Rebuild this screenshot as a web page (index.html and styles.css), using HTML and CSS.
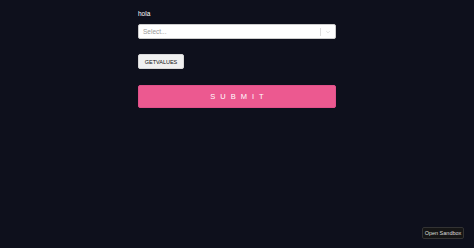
FILE: index.html
```html
<!DOCTYPE html>
<html>
<head>
<meta charset="utf-8">
<link rel="stylesheet" href="styles.css">
</head>
<body>
<form class="form">
  <label class="label">hola</label>
  <div class="select">
    <span class="placeholder">Select...</span>
    <span class="indicators">
      <span class="sep"></span>
      <svg class="chev" viewBox="0 0 20 20" width="6" height="6"><path d="M4 7l6 6 6-6" fill="none" stroke="#ccc" stroke-width="2"/></svg>
    </span>
  </div>
  <button type="button" class="getvalues">GETVALUES</button>
  <button type="button" class="submit">Submit</button>
</form>
<button type="button" class="sandbox">Open Sandbox</button>
</body>
</html>
```
FILE: styles.css
```css
html, body {
  margin: 0;
  padding: 0;
  background: #0e101c;
  height: 100%;
}
body {
  font-family: "Liberation Sans", Arial, sans-serif;
  color: #fff;
}
.form {
  width: 198px;
  margin: 0 auto;
  padding-top: 10px;
  display: flex;
  flex-direction: column;
  align-items: flex-start;
}
.label {
  font-size: 6.5px;
  line-height: 8px;
  height: 8px;
  margin-bottom: 6px;
}
.select {
  box-sizing: border-box;
  width: 198px;
  height: 15px;
  background: #fff;
  border: 1px solid #ccc;
  border-radius: 2px;
  display: flex;
  align-items: center;
  justify-content: space-between;
  padding-left: 4px;
}
.placeholder {
  color: #999;
  font-size: 6.5px;
}
.indicators {
  display: flex;
  align-items: center;
  height: 100%;
}
.sep {
  width: 1px;
  height: 8px;
  background: #ddd;
}
.chev {
  margin: 0 4px;
}
.getvalues {
  margin-top: 15px;
  box-sizing: border-box;
  width: 46px;
  height: 15px;
  background: #f0f0f0;
  border: 1px solid #d8d8d8;
  border-radius: 2px;
  font-family: "Liberation Sans", Arial, sans-serif;
  font-size: 5.5px;
  color: #111;
  padding: 0;
}
.submit {
  margin-top: 16px;
  box-sizing: border-box;
  width: 198px;
  height: 23px;
  background: #ec5990;
  border: 1px solid #e0508a;
  border-radius: 2px;
  color: #fff;
  text-transform: uppercase;
  font-family: "Liberation Sans", Arial, sans-serif;
  font-size: 7.5px;
  letter-spacing: 5px;
  padding: 0 0 0 5px;
}
.sandbox {
  position: fixed;
  right: 10px;
  bottom: 9px;
  box-sizing: border-box;
  height: 12px;
  width: 42px;
  padding: 0;
  background: #151515;
  border: 1px solid #333;
  border-radius: 2px;
  color: #ddd;
  font-family: "Liberation Sans", Arial, sans-serif;
  font-size: 5.5px;
}
```
